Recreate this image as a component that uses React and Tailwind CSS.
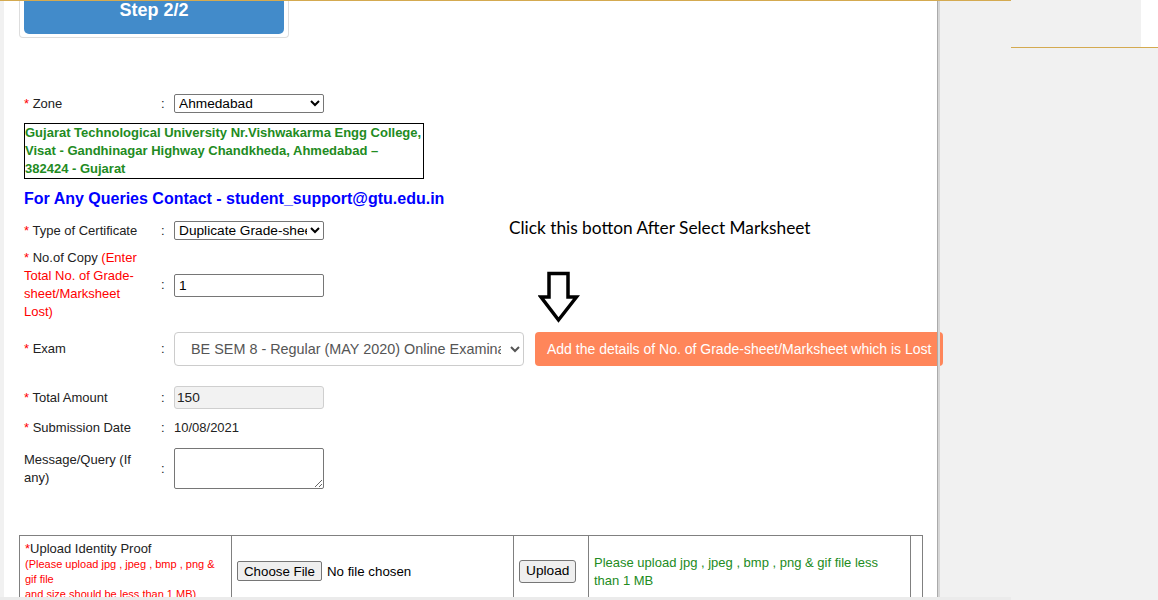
import React from "react"

const base = { fontFamily: '"Liberation Sans", Arial, sans-serif' }

function Req() {
  return <span className="text-[#ff0000]">*</span>
}

function Row({ label, children, className = "" }) {
  return (
    <div className={"flex items-center " + className}>
      <div className="w-[137px] shrink-0 pr-[15px] text-[13px] leading-[18px] text-[#222]">{label}</div>
      <div className="w-[13px] shrink-0 text-[13px] leading-[18px] text-[#222]">:</div>
      <div className="flex items-center">{children}</div>
    </div>
  )
}

export default function App() {
  return (
    <div className="relative flex w-[1158px] h-[600px] overflow-hidden bg-[#f1f1f1]" style={base}>
      {/* left gutter */}
      <div className="w-[4px] shrink-0" />

      {/* main panel */}
      <div className="w-[933px] shrink-0 bg-white">
        {/* step header */}
        <div className="ml-[15px] w-[270px] border-x border-b border-[#dddddd] rounded-b-[4px] px-[4px] pb-[3px]">
          <div className="h-[34px] bg-[#428bca] rounded-b-[5px] text-center text-white text-[18px] font-bold leading-[20px]">
            Step 2/2
          </div>
        </div>

        <div className="ml-[20px]">
          <Row label={<><Req /> Zone</>} className="mt-[56px]">
            <select className="w-[150px] h-[19px] border border-[#767676] rounded-[2px] text-[13.7px] text-black bg-white">
              <option>Ahmedabad</option>
            </select>
          </Row>

          <div className="mt-[10px] w-[400px] border border-black text-[13px] leading-[18px] font-bold text-[#228b22]">
            Gujarat Technological University Nr.Vishwakarma Engg College, Visat - Gandhinagar Highway Chandkheda, Ahmedabad – 382424 - Gujarat
          </div>

          <div className="mt-[10px] text-[16px] leading-[20px] font-bold text-[#0000ff]">
            For Any Queries Contact - student_support@gtu.edu.in
          </div>

          <Row label={<><Req /> Type of Certificate</>} className="mt-[12px]">
            <select className="w-[150px] h-[19px] border border-[#767676] rounded-[2px] text-[13.7px] text-black bg-white">
              <option>Duplicate Grade-sheet/Marksheet</option>
            </select>
          </Row>

          <Row
            label={
              <>
                <Req /> No.of Copy{" "}
                <span className="text-[#ff0000]">(Enter Total No. of Grade-sheet/Marksheet Lost)</span>
              </>
            }
            className="mt-[9px]"
          >
            <input
              defaultValue="1"
              className="w-[150px] h-[23px] border border-[#767676] rounded-[2px] px-[4px] text-[13.7px] text-black"
            />
          </Row>

          <Row label={<><Req /> Exam</>} className="mt-[11px]">
            <select className="w-[350px] h-[34px] border border-[#cccccc] rounded-[4px] pl-[12px] pr-[6px] text-[14.4px] text-[#555555] bg-white">
              <option>BE SEM 8 - Regular (MAY 2020) Online Examination</option>
            </select>
            <button className="ml-[11px] h-[34px] px-[12px] rounded-[4px] bg-[#ff865a] text-white text-[14px] whitespace-nowrap">
              Add the details of No. of Grade-sheet/Marksheet which is Lost
            </button>
          </Row>

          <Row label={<><Req /> Total Amount</>} className="mt-[20px]">
            <input
              defaultValue="150"
              readOnly
              className="w-[150px] h-[23px] border border-[#cfcfcf] rounded-[3px] bg-[#f2f2f2] px-[2px] text-[13.7px] text-[#222]"
            />
          </Row>

          <Row label={<><Req /> Submission Date</>} className="mt-[10px]">
            <span className="text-[13px] leading-[18px] text-[#222]">10/08/2021</span>
          </Row>

          <Row label="Message/Query (If any)" className="mt-[11px]">
            <textarea className="w-[150px] h-[41px] border border-[#767676] rounded-[2px]" />
          </Row>
        </div>

        {/* upload table */}
        <table className="mt-[46px] ml-[15px] border-collapse text-[13px]">
          <tbody>
            <tr>
              <td className="w-[212px] border border-[#808080] px-[5px] py-[5px] align-middle">
                <div className="w-[200px]">
                  <div className="leading-[16px] text-[#222]">
                    <span className="text-[#ff0000]">*</span>Upload Identity Proof
                  </div>
                  <div className="text-[11px] leading-[15px] text-[#ff0000]">
                    (Please upload jpg , jpeg , bmp , png &amp; gif file
                    <br />
                    and size should be less than 1 MB)
                  </div>
                </div>
              </td>
              <td className="w-[282px] border border-[#808080] px-[5px] align-middle">
                <input
                  type="file"
                  className="text-[13.3px] text-black file:mr-[5px] file:h-[20px] file:px-[6px] file:border file:border-[#767676] file:rounded-[2px] file:bg-[#efefef] file:text-black"
                />
              </td>
              <td className="w-[75px] border border-[#808080] px-[5px] align-middle">
                <button className="h-[23px] px-[6px] border border-[#767676] rounded-[3px] bg-[#efefef] text-[13.7px] text-black">
                  Upload
                </button>
              </td>
              <td className="w-[322px] border border-[#808080] px-[5px] align-middle">
                <div className="max-w-[300px] leading-[18px] text-[#228b22]">
                  Please upload jpg , jpeg , bmp , png &amp; gif file less than 1 MB
                </div>
              </td>
              <td className="w-[12px] border border-[#808080]" />
            </tr>
          </tbody>
        </table>
      </div>

      {/* panel edge shadow */}
      <div className="w-[1px] shrink-0 bg-[#aaaaaa]" />
      <div className="w-[2px] shrink-0 bg-[#d6d6d6]" />
      <div className="flex-1" />

      {/* header decoration overlays */}
      <div className="absolute left-0 top-0 h-[1px] w-[1011px] bg-[#d4aa50]" />
      <div className="absolute right-0 top-0 h-[47px] w-[17px] bg-white" />
      <div className="absolute right-0 top-[47px] h-[1px] w-[147px] bg-[#d4aa50]" />
      <div className="absolute left-0 bottom-0 h-[3px] w-[1011px] bg-[#ebebeb]" />

      {/* annotation */}
      <div
        className="absolute left-[509px] top-[217px] text-[17.3px] leading-[22px] text-black whitespace-nowrap"
        style={{ fontFamily: 'Lato, "Open Sans", sans-serif' }}
      >
        Click this botton After Select Marksheet
      </div>
      <svg className="absolute left-[538px] top-[271px]" width="42" height="53" viewBox="0 0 42 53">
        <polygon
          points="11,2.5 30,2.5 30,26 38.5,26 20.5,49 3,26 11,26"
          fill="none"
          stroke="black"
          strokeWidth="3.5"
          strokeLinejoin="miter"
        />
      </svg>
    </div>
  )
}
